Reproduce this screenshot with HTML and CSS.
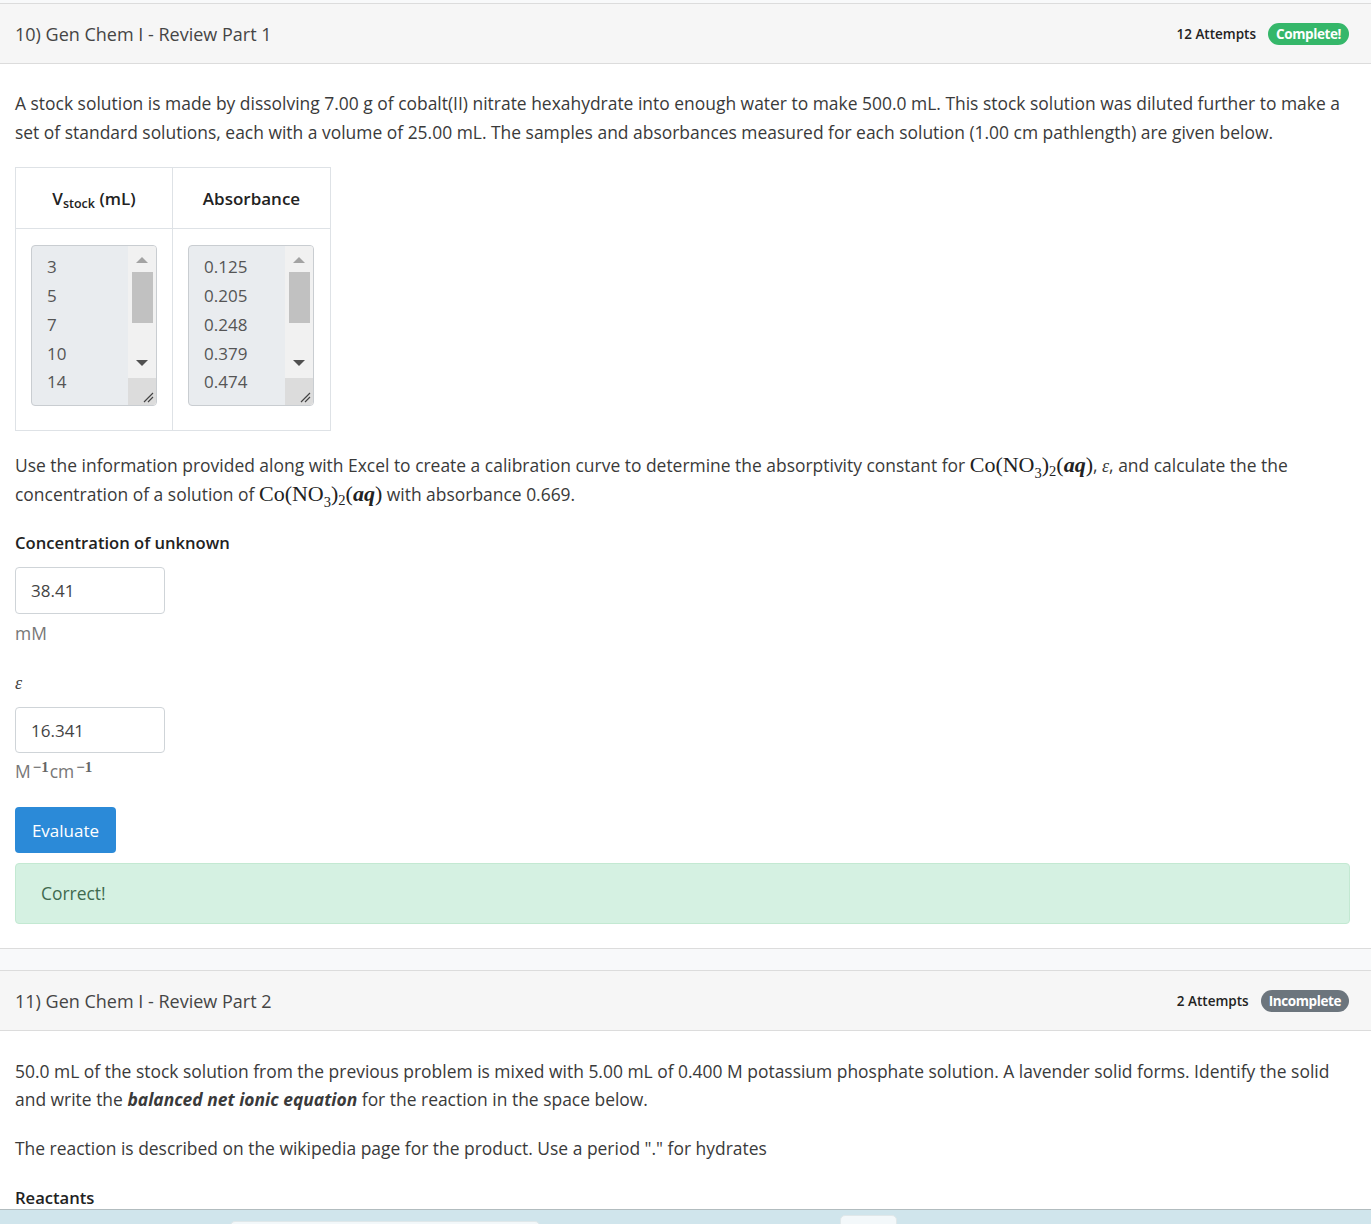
FILE: index.html
```html
<!DOCTYPE html>
<html lang="en">
<head>
<meta charset="utf-8">
<title>Gen Chem I - Review</title>
<link rel="stylesheet" href="styles.css">
</head>
<body>
<div class="page">
  <section class="card">
    <header class="card-header">
      <h2 class="q-title">10) Gen Chem I - Review Part 1</h2>
      <div class="status">
        <span class="attempts">12 Attempts</span>
        <span class="badge badge-success">Complete!</span>
      </div>
    </header>
    <div class="card-body">
      <p class="text">A stock solution is made by dissolving 7.00 g of cobalt(II) nitrate hexahydrate into enough water to make 500.0 mL. This stock solution was diluted further to make a set of standard solutions, each with a volume of 25.00 mL. The samples and absorbances measured for each solution (1.00 cm pathlength) are given below.</p>
      <table class="data-table">
        <thead>
          <tr>
            <th>V<sub class="tsub">stock</sub> (mL)</th>
            <th>Absorbance</th>
          </tr>
        </thead>
        <tbody>
          <tr>
            <td>
              <div class="fake-textarea">
                <div class="ta-content">
                  <div>3</div><div>5</div><div>7</div><div>10</div><div>14</div><div class="ta-peek">18</div>
                </div>
                <div class="ta-scroll">
                  <span class="arr arr-up"></span>
                  <span class="thumb"></span>
                  <span class="arr arr-down"></span>
                  <span class="resize"><svg width="12" height="12" viewBox="0 0 12 12"><path d="M2 11 L11 2 M6 11 L11 6" stroke="#444" stroke-width="1.2" fill="none"/></svg></span>
                </div>
              </div>
            </td>
            <td>
              <div class="fake-textarea">
                <div class="ta-content">
                  <div>0.125</div><div>0.205</div><div>0.248</div><div>0.379</div><div>0.474</div><div class="ta-peek">0.611</div>
                </div>
                <div class="ta-scroll">
                  <span class="arr arr-up"></span>
                  <span class="thumb"></span>
                  <span class="arr arr-down"></span>
                  <span class="resize"><svg width="12" height="12" viewBox="0 0 12 12"><path d="M2 11 L11 2 M6 11 L11 6" stroke="#444" stroke-width="1.2" fill="none"/></svg></span>
                </div>
              </div>
            </td>
          </tr>
        </tbody>
      </table>
      <p class="text">Use the information provided along with Excel to create a calibration curve to determine the absorptivity constant for <span class="math">Co(NO<sub class="s3">3</sub>)<sub class="s2">2</sub>(<i class="aq">aq</i>)</span>, <i class="mvar">ε</i>, and calculate the the concentration of a solution of <span class="math">Co(NO<sub class="s3">3</sub>)<sub class="s2">2</sub>(<i class="aq">aq</i>)</span> with absorbance 0.669.</p>
      <div class="field-label">Concentration of unknown</div>
      <input class="answer" type="text" value="38.41">
      <div class="unit">mM</div>
      <div class="field-label eps"><i class="mvar">ε</i></div>
      <input class="answer answer-2" type="text" value="16.341">
      <div class="unit unit-2">M<sup class="msup">−1</sup>cm<sup class="msup">−1</sup></div>
      <button class="btn-evaluate" type="button">Evaluate</button>
      <div class="alert-success">Correct!</div>
    </div>
  </section>

  <section class="card card-2">
    <header class="card-header">
      <h2 class="q-title">11) Gen Chem I - Review Part 2</h2>
      <div class="status">
        <span class="attempts">2 Attempts</span>
        <span class="badge badge-secondary">Incomplete</span>
      </div>
    </header>
    <div class="card-body card-body-2">
      <p class="text">50.0 mL of the stock solution from the previous problem is mixed with 5.00 mL of 0.400 M potassium phosphate solution. A lavender solid forms. Identify the solid and write the <b><i>balanced net ionic equation</i></b> for the reaction in the space below.</p>
      <p class="text">The reaction is described on the wikipedia page for the product. Use a period "." for hydrates</p>
      <div class="field-label">Reactants</div>
    </div>
  </section>
</div>
<div class="bottom-bar">
  <span class="bb-box bb-box-1"></span>
  <span class="bb-box bb-box-2"></span>
</div>
</body>
</html>
```
FILE: styles.css
```css
* { box-sizing: border-box; }
html, body { margin: 0; padding: 0; }
body {
  background: #f8f9fa;
  font-family: "Open Sans", "Noto Sans", sans-serif;
  color: #3a3a3a;
  font-size: 17.45px;
}
.page { padding-top: 3px; }

.card {
  background: #fff;
  border-top: 1px solid #dcdcdc;
  border-bottom: 1px solid #dcdcdc;
}
.card-2 { margin-top: 21px; }

.card-header {
  height: 60px;
  background: #f6f6f6;
  border-bottom: 1px solid #dcdcdc;
  display: flex;
  align-items: center;
  justify-content: space-between;
  padding: 0 22px 0 15px;
}
.q-title {
  margin: 0;
  font-size: 18px;
  font-weight: 400;
  color: #454545;
}
.status { display: flex; align-items: center; gap: 12px; }
.attempts { font-size: 13.5px; font-weight: 600; color: #222; }
.badge {
  display: inline-block;
  height: 22px;
  line-height: 22px;
  padding: 0 8px;
  border-radius: 11px;
  color: #fff;
  font-size: 13.5px;
  font-weight: 700;
  letter-spacing: -0.4px;
}
.badge-success { background: #35b76a; }
.badge-secondary { background: #6c757d; }

.card-body { padding: 25px 21px 24px 15px; }
.card-body-2 { padding-top: 26px; }

.text {
  margin: 0 0 20px;
  line-height: 28.6px;
}
.card-body-2 .text { line-height: 28px; margin-bottom: 21px; }

.data-table {
  border-collapse: collapse;
  margin-top: 21px;
  margin-bottom: 20px;
}
.data-table th, .data-table td {
  border: 1px solid #dee2e6;
}
.data-table th {
  height: 61px;
  font-weight: 600;
  font-size: 17px;
  color: #222;
  text-align: center;
  vertical-align: middle;
}
.data-table th:first-child { width: 157px; }
.data-table th:last-child { width: 158px; }
.tsub { font-size: 12.5px; vertical-align: -3px; line-height: 0; }
.data-table td {
  padding: 16px 15px 24px 15px;
  vertical-align: top;
}

.fake-textarea {
  width: 126px;
  height: 161px;
  border: 1px solid #c9cdd1;
  border-radius: 4px;
  background: #e9ecef;
  display: flex;
  overflow: hidden;
}
.ta-content {
  flex: 1;
  padding: 7px 0 0 15px;
  line-height: 28.8px;
  font-size: 17px;
  color: #555;
  overflow: hidden;
}
.ta-peek { line-height: 20px; padding-top: 12px; }
.ta-scroll {
  width: 28px;
  background: #f1f1f1;
  display: flex;
  flex-direction: column;
  align-items: center;
}
.arr { width: 0; height: 0; border-left: 6px solid transparent; border-right: 6px solid transparent; }
.arr-up { border-bottom: 6px solid #a3a3a3; margin-top: 11px; }
.arr-down { border-top: 6px solid #505050; margin-top: 37px; }
.thumb {
  width: 21px;
  height: 51px;
  background: #c1c1c1;
  margin-top: 9px;
}
.resize {
  margin-top: auto;
  width: 28px;
  height: 27px;
  background: #dcdcdc;
  display: flex;
  align-items: flex-end;
  justify-content: flex-end;
  padding: 0 2px 2px 0;
}

.math {
  font-family: "Liberation Serif", "DejaVu Serif", serif;
  font-size: 22px;
  line-height: 0;
  color: #222;
}
.math sub { font-size: 14.5px; line-height: 0; }
.s3 { vertical-align: -6px; }
.s2 { vertical-align: -4px; }
.aq { font-weight: 700; }
.mvar { font-family: "Liberation Serif", serif; font-style: italic; font-size: 18px; line-height: 0; }

.field-label {
  line-height: 29px;
  font-weight: 600;
  color: #222;
  margin-bottom: 10px;
  font-size: 16.6px;
}
.eps { font-weight: 400; margin-top: 23px; color: #444; }

.answer {
  display: block;
  width: 150px;
  height: 47px;
  border: 1px solid #cfd4d8;
  border-radius: 4px;
  padding: 0 15px;
  font-family: inherit;
  font-size: 17px;
  color: #444;
  background: #fff;
}
.answer-2 { height: 46px; }
.unit {
  margin-top: 7px;
  line-height: 24px;
  color: #777;
}
.unit-2 { margin-top: 6px; }
.msup {
  font-family: "Liberation Serif", serif;
  font-weight: 700;
  font-size: 15px;
  vertical-align: 6px;
  line-height: 0;
  color: #666;
  margin: 0 1px 0 2px;
}

.btn-evaluate {
  display: block;
  margin-top: 24px;
  width: 101px;
  height: 46px;
  border: none;
  border-radius: 4px;
  background: #2b8ad8;
  color: #fff;
  font-family: inherit;
  font-size: 17px;
}
.alert-success {
  margin-top: 10px;
  height: 61px;
  line-height: 59px;
  padding: 0 25px;
  background: #d5f1e2;
  border: 1px solid #c3e9d2;
  border-radius: 4px;
  color: #3f6a4f;
}

.bottom-bar {
  position: fixed;
  left: 0;
  right: 0;
  bottom: 0;
  height: 15px;
  background: #d0e5ec;
  border-top: 1px solid #b2bcbf;
}
.bb-box {
  position: absolute;
  background: #f3f8fa;
  border: 1px solid #e0e8ea;
  border-radius: 5px;
}
.bb-box-1 { left: 230px; width: 310px; top: 11px; height: 12px; }
.bb-box-2 { left: 840px; width: 57px; top: 5px; height: 18px; }
```
